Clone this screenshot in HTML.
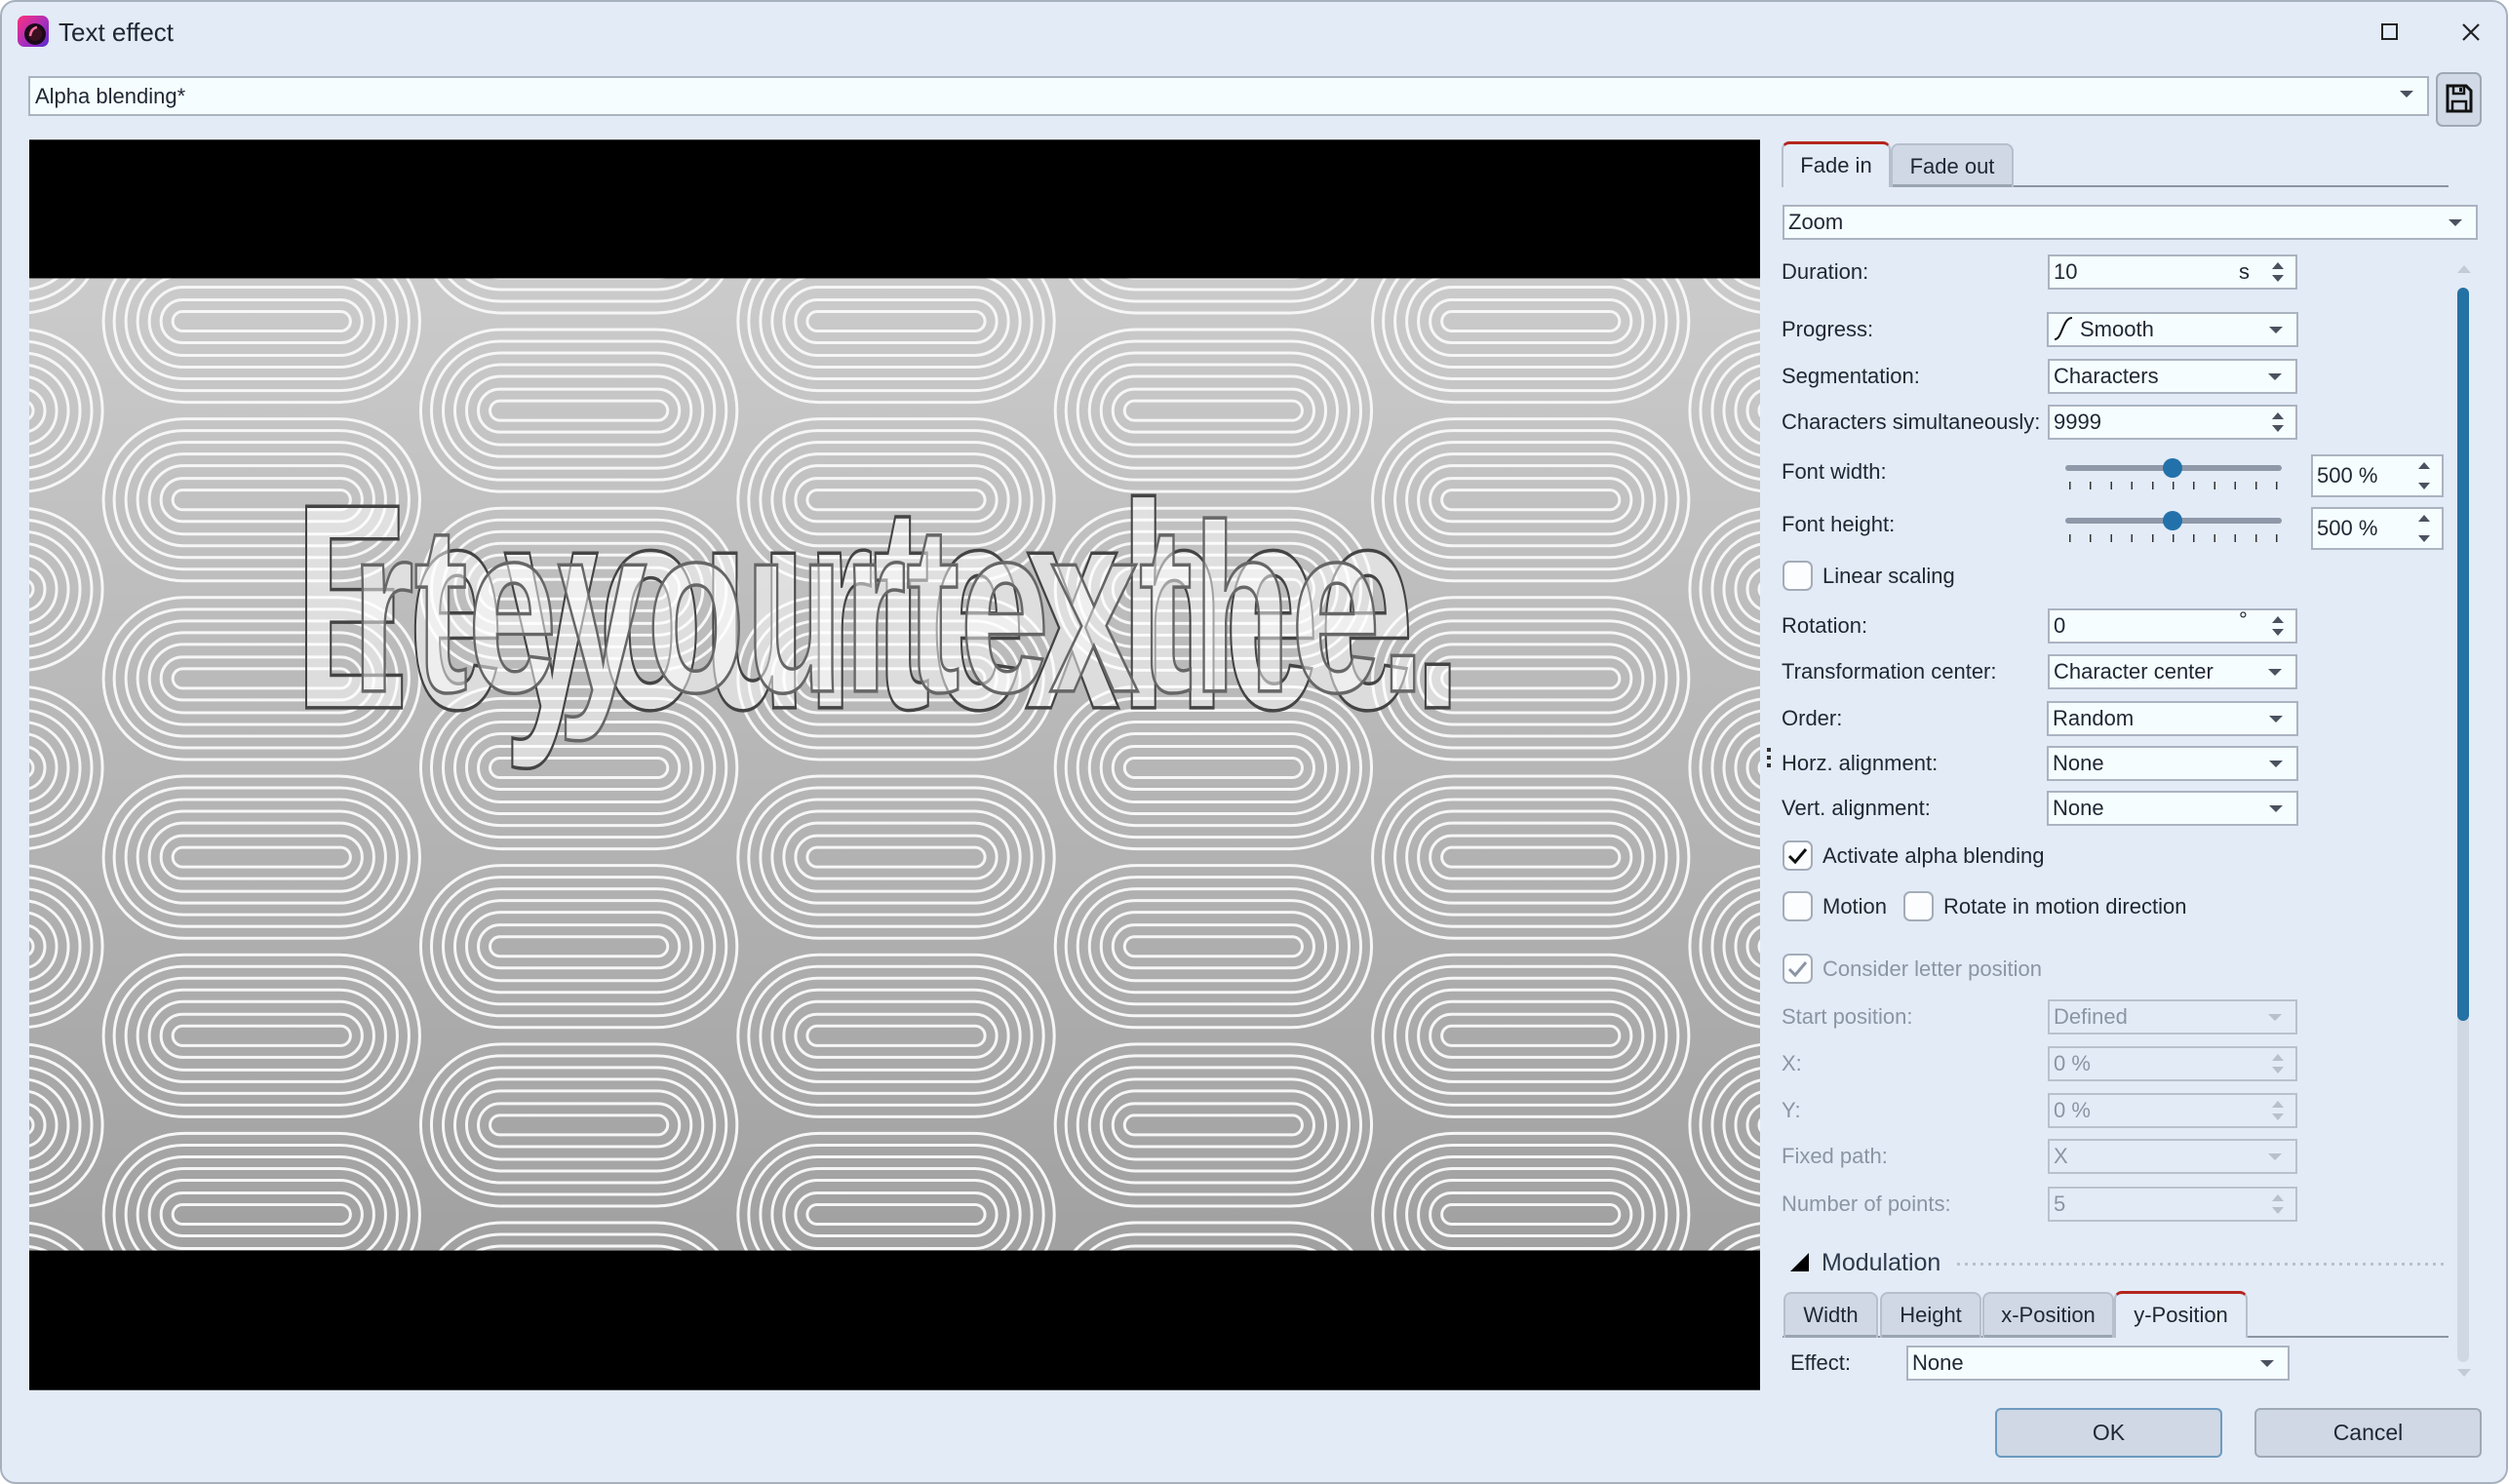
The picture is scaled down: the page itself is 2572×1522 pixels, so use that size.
<!DOCTYPE html>
<html><head><meta charset="utf-8">
<style>
*{box-sizing:border-box;margin:0;padding:0}
body{width:2572px;height:1522px;background:#fff;font-family:"Liberation Sans",sans-serif;color:#1f2937;overflow:hidden;position:relative}
.win{position:absolute;left:0;top:0;width:2572px;height:1522px;background:#e3ebf7;border:2px solid #a7b1be;border-radius:16px}
.a{position:absolute}
.lbl{position:absolute;font-size:22px;line-height:26px;color:#1f2733;white-space:nowrap}
.dis{color:#8b95a3}
.fld{position:absolute;height:36px;background:#f6fdff;border:2px solid #aab3c0;font-size:22px;line-height:32px;padding-left:4px;color:#1f2733;white-space:nowrap}
.fld.d{background:#e3ebf7;color:#8b95a3;border-color:#b9c1cc}
.dd::after{content:"";position:absolute;right:14px;top:13px;border-left:7px solid transparent;border-right:7px solid transparent;border-top:7px solid #4a5260}
.fld.d.dd::after{border-top-color:#b8c0cb}
.sp::before{content:"";position:absolute;right:12px;top:6px;border-left:6px solid transparent;border-right:6px solid transparent;border-bottom:7px solid #4a5260}
.sp::after{content:"";position:absolute;right:12px;bottom:6px;border-left:6px solid transparent;border-right:6px solid transparent;border-top:7px solid #4a5260}
.fld.d.sp::before{border-bottom-color:#b8c0cb}
.fld.d.sp::after{border-top-color:#b8c0cb}
.cb{position:absolute;width:31px;height:31px;border:2px solid #a3acb8;border-radius:7px;background:#fbfdff}
.tab{position:absolute;height:47px;border:2px solid #b6bfcb;border-bottom:none;border-radius:8px 8px 0 0;background:#cfd8e4;font-size:22px;line-height:44px;text-align:center;color:#1f2733;box-shadow:inset 0 -3px 0 #9aa4b2}
.tab.act{background:#e3ebf7;border-top:3px solid #b3261e;box-shadow:none}
.btn{position:absolute;height:51px;border:2px solid #9fa9b6;border-radius:6px;background:#cfd8e4;font-size:23px;line-height:47px;text-align:center;color:#1f2733}
</style></head><body>
<div class="win">
<svg class="a" style="left:15px;top:13px" width="34" height="34" viewBox="0 0 34 34">
<defs><linearGradient id="ig" x1="0" y1="0" x2="1" y2="1"><stop offset="0" stop-color="#ff2f7a"/><stop offset=".5" stop-color="#b02fb8"/><stop offset="1" stop-color="#5b2bd0"/></linearGradient></defs>
<rect x="1" y="1" width="32" height="32" rx="7" fill="url(#ig)"/>
<circle cx="19" cy="20" r="11" fill="#1a0a1a"/><circle cx="19" cy="20" r="7" fill="#3a1020"/><path d="M14 22 Q15 14 21 13" stroke="#ff6fa0" stroke-width="2.5" fill="none"/>
</svg>
<div class="lbl" style="left:58px;top:15px;font-size:26px;line-height:32px;color:#1f2733">Text effect</div>
<div class="a" style="left:2440px;top:22px;width:17px;height:17px;border:2px solid #222"></div>
<svg class="a" style="left:2522px;top:21px" width="20" height="20"><path d="M2 2L18 18M18 2L2 18" stroke="#222" stroke-width="2.2"/></svg>

<div class="fld dd" style="left:27px;top:76px;width:2462px;height:41px;line-height:37px;padding-left:5px">Alpha blending*</div>
<div class="a" style="left:2496px;top:72px;width:47px;height:56px;background:#d0d9e5;border:2px solid #9ea8b5;border-radius:7px"></div>
<svg class="a" style="left:2505px;top:83px" width="30" height="32" viewBox="0 0 30 32"><path d="M3 3H22L27 8V29H3Z" fill="none" stroke="#111" stroke-width="3"/><path d="M9 3V11H20V3" fill="none" stroke="#111" stroke-width="2.5"/><rect x="15" y="5" width="3" height="4" fill="#111"/><path d="M8 29V19H22V29" fill="none" stroke="#111" stroke-width="2.5"/></svg>

<svg class="a" style="left:28px;top:141px" width="1775" height="1283" viewBox="0 0 1773 1281">
<defs>
<linearGradient id="bg" gradientUnits="userSpaceOnUse" x1="0" y1="142" x2="0" y2="1138"><stop offset="0" stop-color="#cbcbcb"/><stop offset="1" stop-color="#a1a1a1"/></linearGradient>
<clipPath id="cp"><rect x="0" y="142" width="1773" height="996"/></clipPath>
<g id="s" fill="none" stroke="#f6f6f6" stroke-width="3">
<rect x="-162" y="-83" width="324" height="166" rx="83"/>
<rect x="-151" y="-71" width="302" height="142" rx="71"/>
<rect x="-139" y="-59" width="278" height="118" rx="59"/>
<rect x="-127" y="-47" width="254" height="94" rx="47"/>
<rect x="-115" y="-35" width="230" height="70" rx="35"/>
<rect x="-103" y="-22" width="206" height="44" rx="22"/>
<rect x="-91" y="-10" width="182" height="20" rx="10"/>
</g>
</defs>
<rect width="1773" height="1281" fill="#000"/>
<rect x="0" y="142" width="1773" height="996" fill="url(#bg)"/>
<g clip-path="url(#cp)">
<use href="#s" x="-87" y="94.5"/><use href="#s" x="563" y="94.5"/><use href="#s" x="1213" y="94.5"/><use href="#s" x="1863" y="94.5"/>
<use href="#s" x="238" y="186"/><use href="#s" x="888" y="186"/><use href="#s" x="1538" y="186"/>
<use href="#s" x="-87" y="277.5"/><use href="#s" x="563" y="277.5"/><use href="#s" x="1213" y="277.5"/><use href="#s" x="1863" y="277.5"/>
<use href="#s" x="238" y="369"/><use href="#s" x="888" y="369"/><use href="#s" x="1538" y="369"/>
<use href="#s" x="-87" y="460.5"/><use href="#s" x="563" y="460.5"/><use href="#s" x="1213" y="460.5"/><use href="#s" x="1863" y="460.5"/>
<use href="#s" x="238" y="552"/><use href="#s" x="888" y="552"/><use href="#s" x="1538" y="552"/>
<use href="#s" x="-87" y="643.5"/><use href="#s" x="563" y="643.5"/><use href="#s" x="1213" y="643.5"/><use href="#s" x="1863" y="643.5"/>
<use href="#s" x="238" y="735"/><use href="#s" x="888" y="735"/><use href="#s" x="1538" y="735"/>
<use href="#s" x="-87" y="826.5"/><use href="#s" x="563" y="826.5"/><use href="#s" x="1213" y="826.5"/><use href="#s" x="1863" y="826.5"/>
<use href="#s" x="238" y="918"/><use href="#s" x="888" y="918"/><use href="#s" x="1538" y="918"/>
<use href="#s" x="-87" y="1009.5"/><use href="#s" x="563" y="1009.5"/><use href="#s" x="1213" y="1009.5"/><use href="#s" x="1863" y="1009.5"/>
<use href="#s" x="238" y="1101"/><use href="#s" x="888" y="1101"/><use href="#s" x="1538" y="1101"/>
<use href="#s" x="-87" y="1192.5"/><use href="#s" x="563" y="1192.5"/><use href="#s" x="1213" y="1192.5"/><use href="#s" x="1863" y="1192.5"/>
</g>
<g font-family="Liberation Sans, sans-serif" font-weight="bold" fill="rgba(255,255,255,0.5)" stroke="#444" stroke-width="3.5">
<text x="272" y="582" font-size="300" textLength="1195" lengthAdjust="spacingAndGlyphs">Eeyourtexhee.</text>
<text x="330" y="565" font-size="245" textLength="1100" lengthAdjust="spacingAndGlyphs" stroke="#666">rteyourtexthe.</text>
</g>
</svg>
<div class="a" style="left:1810px;top:765px;width:4px;height:4px;background:#333;box-shadow:0 8px 0 #333,0 16px 0 #333"></div>

<div class="a" style="left:1825px;top:188px;width:684px;height:2px;background:#8a94a3"></div>
<div class="tab act" style="left:1825px;top:143px;width:112px">Fade in</div>
<div class="tab" style="left:1937px;top:145px;width:126px;height:45px">Fade out</div>
<div class="fld dd" style="left:1826px;top:208px;width:713px;height:36px">Zoom</div>

<div class="lbl" style="left:1825px;top:264px">Duration:</div>
<div class="fld sp" style="left:2098px;top:259px;width:256px">10<span style="position:absolute;left:194px">s</span></div>
<div class="lbl" style="left:1825px;top:323px">Progress:</div>
<div class="fld dd" style="left:2097px;top:318px;width:258px"><svg width="22" height="28" style="vertical-align:-6px;margin-right:6px"><path d="M2 25C10 25 10 3 20 3" stroke="#111" stroke-width="2" fill="none"/></svg>Smooth</div>
<div class="lbl" style="left:1825px;top:371px">Segmentation:</div>
<div class="fld dd" style="left:2098px;top:366px;width:256px">Characters</div>
<div class="lbl" style="left:1825px;top:418px">Characters simultaneously:</div>
<div class="fld sp" style="left:2098px;top:413px;width:256px">9999</div>

<div class="lbl" style="left:1825px;top:469px">Font width:</div>
<div class="a" style="left:2116px;top:475px;width:222px;height:6px;border-radius:3px;background:#8e98a8"></div>
<div class="a" style="left:2216px;top:468px;width:20px;height:20px;border-radius:50%;background:#2371aa"></div>
<div class="a" style="left:2120px;top:492px;width:214px;height:8px;background:repeating-linear-gradient(90deg,#333 0 1.5px,transparent 1.5px 21.2px)"></div>
<div class="fld sp" style="left:2368px;top:464px;width:136px;height:44px;line-height:40px">500 %</div>
<div class="lbl" style="left:1825px;top:523px">Font height:</div>
<div class="a" style="left:2116px;top:529px;width:222px;height:6px;border-radius:3px;background:#8e98a8"></div>
<div class="a" style="left:2216px;top:522px;width:20px;height:20px;border-radius:50%;background:#2371aa"></div>
<div class="a" style="left:2120px;top:546px;width:214px;height:8px;background:repeating-linear-gradient(90deg,#333 0 1.5px,transparent 1.5px 21.2px)"></div>
<div class="fld sp" style="left:2368px;top:518px;width:136px;height:44px;line-height:40px">500 %</div>

<div class="cb" style="left:1826px;top:573px"></div>
<div class="lbl" style="left:1867px;top:576px">Linear scaling</div>
<div class="lbl" style="left:1825px;top:627px">Rotation:</div>
<div class="fld sp" style="left:2098px;top:622px;width:256px">0<span style="position:absolute;left:194px;top:-6px">°</span></div>
<div class="lbl" style="left:1825px;top:674px">Transformation center:</div>
<div class="fld dd" style="left:2098px;top:669px;width:256px">Character center</div>
<div class="lbl" style="left:1825px;top:722px">Order:</div>
<div class="fld dd" style="left:2097px;top:717px;width:258px">Random</div>
<div class="lbl" style="left:1825px;top:768px">Horz. alignment:</div>
<div class="fld dd" style="left:2097px;top:763px;width:258px">None</div>
<div class="lbl" style="left:1825px;top:814px">Vert. alignment:</div>
<div class="fld dd" style="left:2097px;top:809px;width:258px">None</div>

<div class="cb" style="left:1826px;top:860px"></div>
<svg class="a" style="left:1831px;top:866px" width="22" height="20"><path d="M2 10L8 16L19 3" stroke="#111" stroke-width="3" fill="none"/></svg>
<div class="lbl" style="left:1867px;top:863px">Activate alpha blending</div>
<div class="cb" style="left:1826px;top:912px"></div>
<div class="lbl" style="left:1867px;top:915px">Motion</div>
<div class="cb" style="left:1950px;top:912px"></div>
<div class="lbl" style="left:1991px;top:915px">Rotate in motion direction</div>

<div class="cb" style="left:1826px;top:976px"></div>
<svg class="a" style="left:1831px;top:982px" width="22" height="20"><path d="M2 10L8 16L19 3" stroke="#8b95a3" stroke-width="3" fill="none"/></svg>
<div class="lbl dis" style="left:1867px;top:979px">Consider letter position</div>
<div class="lbl dis" style="left:1825px;top:1028px">Start position:</div>
<div class="fld d dd" style="left:2098px;top:1023px;width:256px">Defined</div>
<div class="lbl dis" style="left:1825px;top:1076px">X:</div>
<div class="fld d sp" style="left:2098px;top:1071px;width:256px">0 %</div>
<div class="lbl dis" style="left:1825px;top:1124px">Y:</div>
<div class="fld d sp" style="left:2098px;top:1119px;width:256px">0 %</div>
<div class="lbl dis" style="left:1825px;top:1171px">Fixed path:</div>
<div class="fld d dd" style="left:2098px;top:1166px;width:256px">X</div>
<div class="lbl dis" style="left:1825px;top:1220px">Number of points:</div>
<div class="fld d sp" style="left:2098px;top:1215px;width:256px">5</div>

<div class="a" style="left:1834px;top:1283px;width:0;height:0;border-left:19px solid transparent;border-bottom:19px solid #000"></div>
<div class="lbl" style="left:1866px;top:1278px;font-size:25px;line-height:30px;color:#2d3a4b">Modulation</div>
<div class="a" style="left:2005px;top:1293px;width:500px;height:3px;background:repeating-linear-gradient(90deg,#b8c1cd 0 3px,transparent 3px 8px)"></div>
<div class="a" style="left:1826px;top:1368px;width:683px;height:2px;background:#8a94a3"></div>
<div class="tab" style="left:1827px;top:1323px;width:97px">Width</div>
<div class="tab" style="left:1926px;top:1323px;width:104px">Height</div>
<div class="tab" style="left:2031px;top:1323px;width:135px">x-Position</div>
<div class="tab act" style="left:2166px;top:1322px;width:137px;height:48px">y-Position</div>
<div class="lbl" style="left:1834px;top:1383px">Effect:</div>
<div class="fld dd" style="left:1953px;top:1378px;width:393px">None</div>

<div class="a" style="left:2518px;top:270px;width:0;height:0;border-left:7px solid transparent;border-right:7px solid transparent;border-bottom:8px solid #c3cbd6"></div>
<div class="a" style="left:2518px;top:293px;width:12px;height:1102px;background:#d0d8e3;border-radius:6px"></div>
<div class="a" style="left:2518px;top:293px;width:12px;height:752px;background:#2471a3;border-radius:6px"></div>
<div class="a" style="left:2518px;top:1402px;width:0;height:0;border-left:7px solid transparent;border-right:7px solid transparent;border-top:8px solid #c3cbd6"></div>

<div class="btn" style="left:2044px;top:1442px;width:233px;border-color:#6d9bc0">OK</div>
<div class="btn" style="left:2310px;top:1442px;width:233px">Cancel</div>
</div>
</body></html>
